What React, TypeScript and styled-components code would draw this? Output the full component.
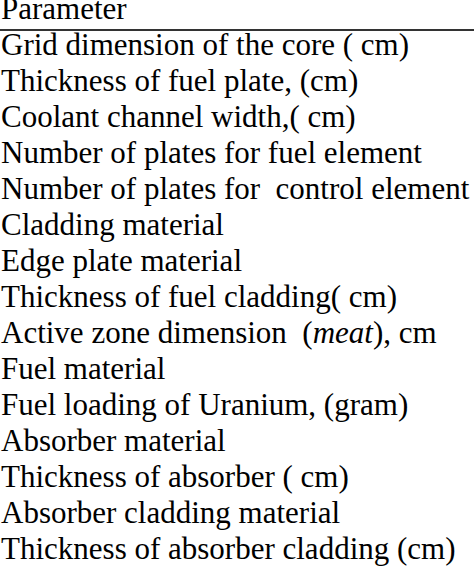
import React from "react";
import styled, { createGlobalStyle } from "styled-components";

const Global = createGlobalStyle`
  html, body { margin: 0; padding: 0; background: #fff; overflow: hidden; }
  body { font-family: "Liberation Serif", "Times New Roman", serif; color: #000; }
`;

const Table = styled.div`
  display: flex;
  flex-direction: column;
  margin-top: -6px;
`;

const HeaderCell = styled.div`
  font-size: 31px;
  line-height: 28px;
  padding: 1px 0 6px 1px;
  border-bottom: 2px solid #333;
  white-space: pre;
`;

const Row = styled.div`
  font-size: 31px;
  line-height: 28px;
  padding: 0 0 8px 1px;
  white-space: pre;
`;

const Em = styled.i`
  font-style: italic;
`;

const rows: React.ReactNode[] = [
  "Grid dimension of the core ( cm)",
  "Thickness of fuel plate, (cm)",
  "Coolant channel width,( cm)",
  "Number of plates for fuel element",
  "Number of plates for  control element",
  "Cladding material",
  "Edge plate material",
  "Thickness of fuel cladding( cm)",
  <>Active zone dimension  (<Em>meat</Em>), cm</>,
  "Fuel material",
  "Fuel loading of Uranium, (gram)",
  "Absorber material",
  "Thickness of absorber ( cm)",
  "Absorber cladding material",
  "Thickness of absorber cladding (cm)",
];

export default function App() {
  return (
    <>
      <Global />
      <Table>
        <HeaderCell>Parameter</HeaderCell>
        {rows.map((r, i) => (
          <Row key={i}>{r}</Row>
        ))}
      </Table>
    </>
  );
}
